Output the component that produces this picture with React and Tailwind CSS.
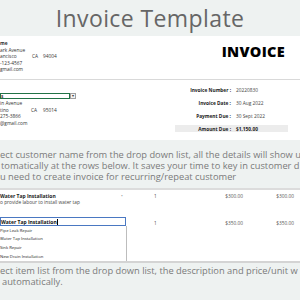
export default function App() {
  return (
    <div className="w-[300px] h-[300px] overflow-hidden bg-white font-['Open_Sans',sans-serif] text-black">
      <div className="h-[36px] bg-[#eef2f1] flex items-center justify-center">
        <h1 className="text-[23px] font-medium text-[#666] leading-none tracking-[0.4px]">Invoice Template</h1>
      </div>

      <div className="h-[43px] flex justify-between">
        <div className="pt-[4px] text-[4.8px] leading-[6.5px] text-[#333] whitespace-nowrap">
          <div className="font-bold">me</div>
          <div>ark Avenue</div>
          <div className="flex">
            <span className="w-[32px]">ancisco</span>
            <span className="w-[11px]">CA</span>
            <span>94004</span>
          </div>
          <div>-123-4567</div>
          <div>gmail.com</div>
        </div>
        <div className="pr-[15px] pt-[9px] text-[14.5px] font-extrabold leading-none tracking-[0.3px]">INVOICE</div>
      </div>

      <div className="h-[1px] bg-[#d9d9d9]" />

      <div className="h-[60px] flex">
        <div className="pt-[13px] text-[4.8px] leading-[6.5px] text-[#333] whitespace-nowrap">
          <div className="flex items-stretch h-[6px]">
            <div className="w-[70px] border border-[#217346] leading-[4px] font-bold">s</div>
            <div className="w-[6px] border border-[#a0a0a0] bg-[#f4f4f4] flex items-center justify-center text-[4px] leading-none">▾</div>
          </div>
          <div className="mt-[1px]">in Avenue</div>
          <div className="flex">
            <span className="w-[31px]">tino</span>
            <span className="w-[12px]">CA</span>
            <span>95014</span>
          </div>
          <div>275-3866</div>
          <div>@gmail.com</div>
        </div>
        <div className="ml-auto mr-[12px] w-[113px] pt-[3px] text-[4.8px] leading-[6px] whitespace-nowrap">
          {[
            ["Invoice Number :", "20220830"],
            ["Invoice Date :", "30 Aug 2022"],
            ["Payment Due :", "30 Sept 2022"],
            ["Amount Due :", "$1,150.00"],
          ].map(([label, value], i) => (
            <div key={label} className="flex items-center h-[13px]">
              <div className={`flex w-full items-center h-[7px] ${i === 3 ? "bg-[#ececec]" : ""}`}>
                <span className="w-[56px] text-right font-bold text-[#222]">{label}</span>
                <span className={`pl-[5px] ${i === 3 ? "font-bold text-[#222]" : "text-[#444]"}`}>{value}</span>
              </div>
            </div>
          ))}
        </div>
      </div>

      <div className="h-[48px] bg-[#eef2f1] pt-[8.5px] text-[9.3px] leading-[11px] text-[#7a7a7a] whitespace-nowrap overflow-hidden">
        <div>ect customer name from the drop down list, all the details will show u</div>
        <div className="pl-[1px]">tomatically at the rows below.  It saves your time to key in customer d</div>
        <div>u need to create invoice for recurring/repeat customer</div>
      </div>

      <div className="h-[73px] border-t-[2px] border-[#dcdcdc] text-[4.8px] leading-[6px] whitespace-nowrap">
        <div className="h-[20px] flex pt-[3px]">
          <div className="w-[118px]">
            <div className="font-bold text-[#222] text-[5px]">Water Tap Installation</div>
            <div className="text-[#444]">o provide labour to install water tap</div>
          </div>
          <div className="w-[8px] text-center text-[#999]">•</div>
          <div className="w-[28px]" />
          <div className="w-[10px] text-[#555]">1</div>
          <div className="w-[79px] text-right text-[#555]">$300.00</div>
          <div className="w-[51px] text-right text-[#555]">$300.00</div>
        </div>
        <div className="h-[51px] flex">
          <div className="w-[126px] relative pt-[7px]">
            <div className="h-[9px] border border-[#4a78c2] flex items-center text-[5px] font-bold text-[#111]">
              <span>Water Tap Installation</span>
              <span className="w-[0.5px] h-[6px] bg-black ml-[0.5px]" />
            </div>
            <div className="absolute left-0 top-[16px] w-[127px] h-[35px] bg-white border-r border-[#bdbdbd] text-[4.2px] leading-[8.7px] text-[#222] pt-[0.5px]">
              <div>Pipe Leak Repair</div>
              <div>Water Tap Installation</div>
              <div>Sink Repair</div>
              <div>New Drain Installation</div>
            </div>
          </div>
          <div className="w-[28px]" />
          <div className="w-[10px] pt-[10px] text-[#555]">1</div>
          <div className="w-[79px] pt-[10px] text-right text-[#555]">$350.00</div>
          <div className="w-[51px] pt-[10px] text-right text-[#555]">$350.00</div>
        </div>
      </div>

      <div className="h-[39px] bg-[#eef2f1] border-t-[2px] border-[#d4d4d4] pt-[2px] text-[9.3px] leading-[11px] text-[#7a7a7a] whitespace-nowrap overflow-hidden">
        <div>ect item list from the drop down list, the description and price/unit w</div>
        <div className="pl-[2px]">automatically.</div>
      </div>
    </div>
  );
}
